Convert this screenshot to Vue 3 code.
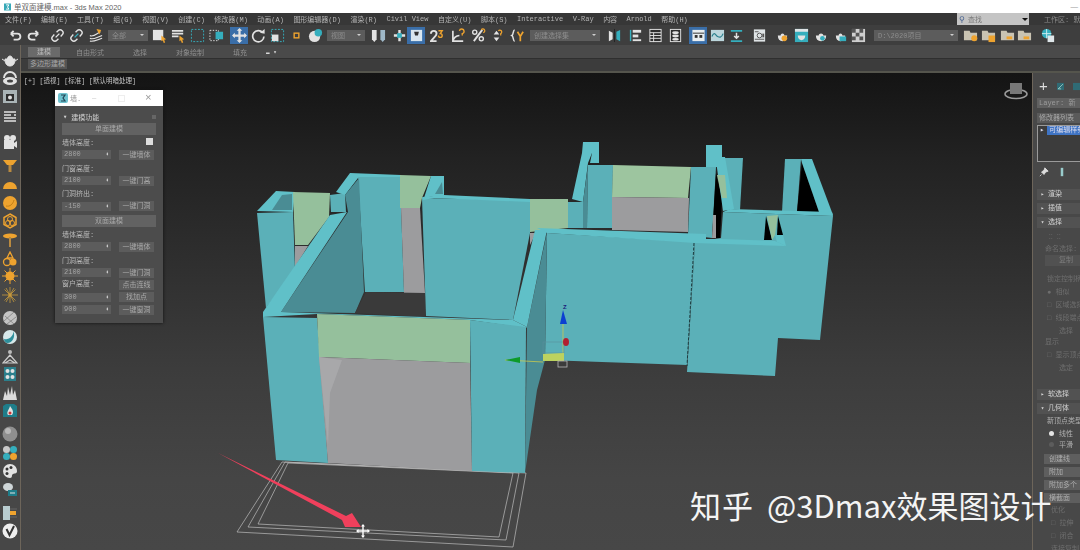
<script setup>
const W = '#e2e2e2'
const O = '#eea32f'
const T = '#35aebd'

// toolbar and rail glyphs, all on a 16x16 box
const glyphs = {
  undo: `<path d="M3 6h7a3.2 3.2 0 0 1 0 6.4H6M3 6l3-3M3 6l3 3" fill="none" stroke="${W}" stroke-width="2"/>`,
  redo: `<path d="M13 6H6a3.2 3.2 0 0 0 0 6.4h4M13 6l-3-3M13 6l-3 3" fill="none" stroke="${W}" stroke-width="2"/>`,
  link: `<path d="M6 10l4-4M7 4.5l1.6-1.6a3 3 0 0 1 4.4 4.4L11.4 9M9 11.5l-1.6 1.6a3 3 0 0 1-4.4-4.4L4.6 7" fill="none" stroke="${W}" stroke-width="1.5"/>`,
  unlink: `<path d="M7 4.5l1.6-1.6a3 3 0 0 1 4.4 4.4L11.4 9M9 11.5l-1.6 1.6a3 3 0 0 1-4.4-4.4L4.6 7" fill="none" stroke="${W}" stroke-width="1.5"/><path d="M6 10l4-4" stroke="${T}" stroke-width="1.5"/>`,
  bind: `<path d="M1 8c3 2 6-1 11-4M1 11c3 2 7-1 13-3M1 14c3 1 7-1 13-3" fill="none" stroke="${W}" stroke-width="1.2"/><path d="M8 1l5 1-2 5z" fill="${O}"/>`,
  sel: `<rect x="1" y="2" width="11" height="11" fill="${W}"/><path d="M10 8l5 4-2 .5 1 3-1.5.5-1-3-1.5 1z" fill="${O}"/>`,
  selname: `<path d="M1 3h12M1 6h12M1 9h7" stroke="${W}" stroke-width="1.8"/><path d="M9 8l5 4-2 .5 1 3-1.5.5-1-3-1.5 1z" fill="${O}"/>`,
  rect: `<rect x="1.5" y="1.5" width="13" height="13" fill="none" stroke="${T}" stroke-dasharray="2 1.5"/>`,
  win: `<rect x="1" y="2.5" width="9" height="11" fill="none" stroke="${W}" stroke-dasharray="1.5 1.5"/><rect x="7" y="4" width="8" height="8" fill="${T}"/>`,
  move: `<path d="M8 1.5v13M1.5 8h13" stroke="${W}" stroke-width="2.4"/><path d="M8 0l3 3H5zM8 16l3-3H5zM0 8l3-3v6zM16 8l-3-3v6z" fill="${W}"/>`,
  rotate: `<path d="M12.5 5a6 6 0 1 0 1.3 4" fill="none" stroke="${W}" stroke-width="1.8"/><path d="M9.5 5l5 1V1z" fill="${W}"/>`,
  scale: `<rect x="1.5" y="1.5" width="13" height="13" fill="none" stroke="${T}" stroke-dasharray="2 1.5"/><rect x="2" y="7" width="7" height="7" fill="${W}"/>`,
  pivot: `<rect x="5.5" y="5.5" width="5" height="5" fill="none" stroke="${O}" stroke-width="1.5"/>`,
  ball: `<circle cx="7" cy="9" r="6" fill="${W}"/><circle cx="11" cy="5" r="4" fill="${T}"/>`,
  mirror: `<path d="M1 2h5v10l-2.5 3L1 12z" fill="${W}"/><path d="M10 2h5v10l-2.5 3L10 12z" fill="#9fb8c8"/>`,
  cross: `<path d="M8 2v12M2 8h12" stroke="${W}" stroke-width="2.6"/><rect x="5.5" y="5.5" width="5" height="5" fill="${T}"/>`,
  frame: `<rect x="2" y="2" width="12" height="12" fill="#d9e6ef"/><path d="M5.5 4h5l-1 4h-3z" fill="#333"/>`,
  snap: `<path d="M1 6a3 3 0 0 1 6 0c0 2-3 4-6 8h6" fill="none" stroke="${W}" stroke-width="2"/><path d="M9 3h4l-2 3a2 2 0 1 1-2 2" fill="none" stroke="${O}" stroke-width="1.5"/>`,
  angle: `<path d="M2 3v11h11M2 14a8 8 0 0 1 7-6" fill="none" stroke="${W}" stroke-width="1.8"/><path d="M9 3a2.5 2.5 0 1 1 3 3v2" fill="none" stroke="${O}" stroke-width="1.5"/>`,
  percent: `<path d="M3 14L12 2" stroke="${W}" stroke-width="2"/><circle cx="4" cy="4.5" r="2.2" fill="none" stroke="${W}" stroke-width="1.5"/><circle cx="11" cy="11.5" r="2.2" fill="none" stroke="${W}" stroke-width="1.5"/><path d="M11 2a2 2 0 1 1 2 3" fill="none" stroke="${O}" stroke-width="1.3"/>`,
  spin: `<path d="M5 7l3-4 3 4zM5 10l3 4 3-4z" fill="${W}"/><path d="M10 3a2 2 0 1 1 2.5 3v2" fill="none" stroke="${O}" stroke-width="1.3"/>`,
  brace: `<path d="M5 2C3 2 4 7 2 8c2 1 1 6 3 6" fill="none" stroke="${W}" stroke-width="1.6"/><path d="M8 4l3 5 3-5M11 9v5" fill="none" stroke="${O}" stroke-width="1.8"/>`,
  mirror2: `<path d="M2 3l4 2v7l-4 2z" fill="${W}"/><path d="M8 1v14" stroke="#222"/><path d="M14 2l-4 2v8l4 2z" fill="${T}"/>`,
  align: `<rect x="2" y="2" width="1.5" height="12" fill="${T}"/><rect x="5" y="2" width="9" height="3" fill="${W}"/><rect x="5" y="7" width="6" height="3" fill="${W}"/><rect x="5" y="12" width="9" height="2" fill="${W}"/>`,
  table: `<rect x="2" y="1.5" width="12" height="13" fill="#2c2c2c" stroke="${W}"/><path d="M2 5h12M2 8h12M2 11h12M6 5v10" stroke="${W}"/>`,
  layers: `<rect x="2.5" y="1.5" width="11" height="13" fill="#2c2c2c" stroke="${W}"/><ellipse cx="8" cy="5" rx="3.5" ry="1.5" fill="${W}"/><ellipse cx="8" cy="8.5" rx="3.5" ry="1.5" fill="${W}"/><ellipse cx="8" cy="12" rx="3.5" ry="1.3" fill="${W}"/>`,
  scene: `<rect x="1.5" y="2" width="13" height="12" fill="#e8edf0"/><path d="M2 5.5h12" stroke="#2c2c2c"/><rect x="4" y="7.5" width="3" height="3" fill="#333"/><rect x="9" y="7.5" width="3" height="3" fill="#333"/>`,
  curve: `<rect x="1" y="2" width="14" height="12" fill="#bcd6dc"/><path d="M2 9c3-6 4-1 6 0s4 2 6-3" fill="none" stroke="#2a7f8c" stroke-width="1.3"/>`,
  schematic: `<path d="M2 3h12M2 14h12" stroke="${T}" stroke-width="2"/><path d="M8 5v6M5.5 8.5L8 11l2.5-2.5" fill="none" stroke="${W}" stroke-width="1.6"/>`,
  panel: `<rect x="2" y="1.5" width="12" height="13" fill="#dfe4e6"/><path d="M3 4h4M3 12h10" stroke="#555"/><circle cx="8" cy="8" r="2.5" fill="none" stroke="#555"/><rect x="11" y="6" width="2" height="4" fill="#555"/>`,
  potA: `<path d="M3 8h10c0 4-2 6-5 6S3 12 3 8zM6 8c0-3 4-3 4 0" fill="${W}"/><circle cx="10" cy="11" r="3" fill="${O}"/>`,
  potB: `<rect x="1" y="1" width="14" height="14" fill="${T}"/><rect x="1" y="1" width="14" height="3" fill="#dfe4e6"/><path d="M4 8h8c0 3-2 5-4 5S4 11 4 8z" fill="${W}"/>`,
  potC: `<path d="M2 8h11c0 4-2 6-5.5 6S2 12 2 8zM5 8c0-3 5-3 5 0" fill="${W}"/><circle cx="9" cy="11" r="2.5" fill="${T}"/>`,
  potD: `<path d="M3 8h10c0 4-2 6-5 6S3 12 3 8zM6 8c0-3 4-3 4 0" fill="${W}"/><rect x="7" y="9" width="7" height="5" fill="${T}"/>`,
  checker: `<rect x="1" y="1" width="14" height="14" fill="#cfcfcf"/><path d="M1 1h4v4H1zM9 1h4v4H9zM5 5h4v4H5zM1 9h4v4H1zM9 9h4v4H9z" fill="#555"/>`,
  fldA: `<path d="M1 3h6l1 2h7v8H1z" fill="#c9c3b2"/><circle cx="12" cy="11" r="3.2" fill="${O}"/>`,
  fldB: `<path d="M1 3h6l1 2h7v8H1z" fill="#c9c3b2"/><rect x="8" y="8" width="7" height="7" fill="${O}"/>`,
  fldC: `<path d="M1 3h6l1 2h7v8H1z" fill="#c9c3b2"/><path d="M7 9h6v3H7z" fill="${O}"/>`,
  globe: `<circle cx="6" cy="6" r="5" fill="${T}"/><path d="M1 6h10M6 1v10" stroke="#cfeef2"/><rect x="7" y="8" width="7" height="7" fill="#dfe7ea"/>`,
  // rail
  teapot: `<path d="M3 7h10c0 5-2 7-5 7S3 12 3 7zM5.5 7c0-4 5-4 5 0M3 9L0 7M13 9l3-2" fill="${W}" stroke="${W}"/>`,
  dome: `<ellipse cx="8" cy="11" rx="7" ry="4" fill="${W}"/><path d="M2 8a6 6 0 0 1 12 0" fill="none" stroke="${W}" stroke-width="2"/><ellipse cx="8" cy="11" rx="3" ry="1.5" fill="#444"/>`,
  photo: `<rect x="1" y="1" width="14" height="13" fill="#aab4b6"/><rect x="4" y="5" width="8" height="7" fill="#2d2d2d"/><circle cx="8" cy="8.5" r="2" fill="${W}"/>`,
  lines: `<path d="M2 3h12M2 6h12M2 9h12M2 12h12" stroke="${W}" stroke-width="1.3"/><rect x="9" y="5" width="3" height="2" fill="#444"/>`,
  movie: `<circle cx="5" cy="4" r="3" fill="${W}"/><circle cx="11" cy="4" r="3" fill="${W}"/><rect x="2" y="6" width="10" height="9" fill="${W}"/><path d="M12 9l3-2v7l-3-2z" fill="${W}"/>`,
  lamp: `<path d="M1 3h14l-4 5H5z" fill="${O}"/><rect x="6.5" y="8" width="3" height="7" fill="#b98a40"/>`,
  half: `<path d="M1 13a7 7 0 0 1 14 0z" fill="${O}"/>`,
  round: `<circle cx="8" cy="8" r="7" fill="${O}"/><path d="M4 11c4 1 7-2 8-6" fill="none" stroke="#c47f14"/>`,
  hex: `<path d="M8 1l6 3.5v7L8 15l-6-3.5v-7z" fill="none" stroke="${O}" stroke-width="1.5"/><circle cx="8" cy="6" r="2.5" fill="none" stroke="${O}"/><circle cx="6" cy="10" r="2.5" fill="none" stroke="${O}"/><circle cx="10" cy="10" r="2.5" fill="none" stroke="${O}"/>`,
  spot: `<ellipse cx="8" cy="4" rx="7" ry="2.5" fill="${O}"/><rect x="7" y="5" width="2" height="10" fill="#b98a40"/>`,
  tri: `<path d="M8 1l3 6H5z" fill="none" stroke="${O}" stroke-width="1.3"/><circle cx="5" cy="11" r="3.5" fill="none" stroke="${O}" stroke-width="1.3"/><circle cx="11" cy="11" r="3.5" fill="${O}"/>`,
  sun: `<circle cx="8" cy="8" r="4.5" fill="${O}"/><path d="M8 0v16M0 8h16M2.5 2.5l11 11M13.5 2.5l-11 11" stroke="${O}"/>`,
  burst: `<circle cx="8" cy="8" r="2" fill="#a07a3a"/><path d="M8 0v16M0 8h16M2.5 2.5l11 11M13.5 2.5l-11 11M4 1l8 14M12 1L4 15" stroke="#c79a3e" stroke-width=".8"/>`,
  sphereG: `<circle cx="8" cy="8" r="7" fill="#c4c4c4"/><path d="M2 11L12 2M5 14l9-7M3 6l9 8" stroke="#777" stroke-width=".7"/>`,
  sphereT: `<circle cx="8" cy="8" r="7" fill="#d6e8ea"/><path d="M1.5 10a8 8 0 0 0 10-8c2 6-1 12-6 12-2 0-3-2-4-4z" fill="#2d8f9c"/>`,
  person: `<circle cx="8" cy="3" r="2" fill="#bbb"/><path d="M1 14L8 6l7 8zM3 14l5-3 5 3" fill="none" stroke="#ccc" stroke-width="1.2"/>`,
  grid: `<rect x="2" y="1" width="12" height="14" fill="#2b7f8c"/><circle cx="5.5" cy="5" r="2" fill="${W}"/><circle cx="10.5" cy="5" r="2" fill="${W}"/><circle cx="5.5" cy="11" r="2" fill="${W}"/><circle cx="10.5" cy="11" r="2" fill="${W}"/>`,
  spiky: `<path d="M1 15L3 6l2 5 1-9 2 8 2-9 1 9 2-5 2 10z" fill="#dcdcdc"/>`,
  flame: `<path d="M1 3l3-2h8l3 2v11H1z" fill="#1f7d8a"/><path d="M8 3c3 4 4 6 2 9H6C4 9 7 7 8 3z" fill="${W}"/><circle cx="8" cy="10" r="1.5" fill="#c33"/>`,
  grey: `<circle cx="8" cy="8" r="7.5" fill="#8f8f8f"/><circle cx="6" cy="5" r="3" fill="#b8b8b8"/>`,
  dots: `<circle cx="4.5" cy="4.5" r="3.5" fill="#c9c9c9"/><circle cx="11.5" cy="4.5" r="3.5" fill="${T}"/><circle cx="4.5" cy="11.5" r="3.5" fill="${T}"/><circle cx="11.5" cy="11.5" r="3.5" fill="${O}"/>`,
  palette: `<path d="M8 1a7 7 0 1 0 0 14c3 0 1-3 3-4s4 0 4-3c0-4-3-7-7-7z" fill="${W}"/><circle cx="5" cy="6" r="1.5" fill="#333"/><circle cx="9" cy="4.5" r="1.5" fill="#333"/><circle cx="5" cy="10.5" r="1.5" fill="#333"/>`,
  chip: `<ellipse cx="6" cy="5" rx="5" ry="4" fill="#cfd6d8"/><rect x="6" y="8" width="9" height="6" fill="#1f7d8a"/><path d="M8 11h5" stroke="${W}"/>`,
  combo: `<rect x="1" y="1" width="7" height="14" fill="#b8ccd0"/><path d="M8 4h7M8 12h7" stroke="#666"/><rect x="8" y="6" width="6" height="4" fill="${O}"/>`,
  vray: `<circle cx="8" cy="8" r="7.5" fill="#eee"/><path d="M4.5 6l3 6 4.5-9" fill="none" stroke="#333" stroke-width="2"/>`
}

const place = (list, key) => {
  // turn centre positions from the data into flow margins
  let end = 0
  return list.map((it) => {
    const size = it.s || 16
    const gap = it[key] - size / 2 - end
    end = it[key] + size / 2
    return { ...it, size, gap }
  })
}

const toolItems = place([
  { x: 15, g: 'undo' }, { x: 33, g: 'redo' }, { x: 57, g: 'link' }, { x: 76, g: 'unlink' }, { x: 96, g: 'bind' },
  { x: 128, s: 40, text: '全部' },
  { x: 159, g: 'sel' }, { x: 178, g: 'selname' }, { x: 197, g: 'rect' }, { x: 216, g: 'win' },
  { x: 239, s: 18, g: 'move', on: true }, { x: 258, g: 'rotate' }, { x: 277, g: 'scale' }, { x: 296, g: 'pivot' }, { x: 315, g: 'ball' },
  { x: 346, s: 38, text: '视图' },
  { x: 378, g: 'mirror' }, { x: 399, g: 'cross' }, { x: 416, s: 18, g: 'frame', on: true },
  { x: 437, g: 'snap' }, { x: 458, g: 'angle' }, { x: 478, g: 'percent' }, { x: 496, g: 'spin' }, { x: 517, g: 'brace' },
  { x: 565, s: 70, text: '创建选择集' },
  { x: 614, g: 'mirror2' }, { x: 635, g: 'align' }, { x: 655, g: 'table' }, { x: 675, g: 'layers' },
  { x: 698, s: 18, g: 'scene', on: true }, { x: 717, g: 'curve' }, { x: 736, g: 'schematic' }, { x: 759, g: 'panel' },
  { x: 782, g: 'potA' }, { x: 801, g: 'potB' }, { x: 821, g: 'potC' }, { x: 840, g: 'potD' }, { x: 858, g: 'checker' },
  { x: 916, s: 84, text: 'D:\\2020项目' },
  { x: 970, g: 'fldA' }, { x: 988, g: 'fldB' }, { x: 1007, g: 'fldC' }, { x: 1024, g: 'fldC' }, { x: 1048, g: 'globe' }
], 'x')

const railItems = place([
  { y: 15, g: 'teapot' }, { y: 33, g: 'dome' }, { y: 52, g: 'photo' }, { y: 72, g: 'lines' }, { y: 97, g: 'movie' },
  { y: 120, g: 'lamp' }, { y: 139, g: 'half' }, { y: 158, g: 'round' }, { y: 176, g: 'hex' }, { y: 195, g: 'spot' },
  { y: 214, g: 'tri' }, { y: 231, g: 'sun' }, { y: 250, g: 'burst' }, { y: 273, g: 'sphereG' }, { y: 292, g: 'sphereT' },
  { y: 312, g: 'person' }, { y: 329, g: 'grid' }, { y: 348, g: 'spiky' }, { y: 366, g: 'flame' }, { y: 389, g: 'grey' },
  { y: 408, g: 'dots' }, { y: 426, g: 'palette' }, { y: 445, g: 'chip' }, { y: 468, g: 'combo' }, { y: 486, g: 'vray' }
], 'y')

const menus = [
  '文件(F)', '编辑(E)', '工具(T)', '组(G)', '视图(V)', '创建(C)', '修改器(M)', '动画(A)', '图形编辑器(D)', '渲染(R)',
  'Civil View', '自定义(U)', '脚本(S)', 'Interactive', 'V-Ray', '内容', 'Arnold', '帮助(H)'
]

const tabs = ['建模', '自由形式', '选择', '对象绘制', '填充']

const dialogRows = [
  { label: '墙体高度:', check: true, value: '2800', btn: '一键墙体' },
  { label: '门窗高度:', value: '2100', btn: '一键门高' },
  { label: '门洞挤出:', value: '-150', btn: '一键门洞' }
]
const dialogRows2 = [
  { label: '墙体高度:', value: '2800', btn: '一键墙体' },
  { label: '门洞高度:', value: '2100', btn: '一键门洞' }
]

// scene faces, back to front, in page coordinates
const TEAL = '#5bb0b8'
const LIGHT = '#60c0c8'
const DARK = '#4a8c94'
const GREEN = '#95c09c'
const GREY = '#9c9c9e'
const faces = [
  ['257,213 293,212 295,270 266,308', TEAL],
  ['257,211 276,191 295,192 293,212', LIGHT],
  ['272,210 282,195 292,194 292,210', DARK],
  ['293,192 330,193 329,217 308,245 295,245', GREEN],
  ['295,246 308,246 295,267', GREY],
  ['330,195 345,193 346,212 331,212', TEAL],
  ['336,192 350,173 401,175 401,177 358,178 345,195', LIGHT],
  ['358,177 400,177 404,292 365,292', TEAL],
  ['345,195 359,178 364,292 355,313 281,312 348,212', DARK],
  ['400,175 431,176 422,198 420,208 400,208', GREEN],
  ['401,208 420,208 425,293 404,293', GREY],
  ['366,292 425,293 425,317 355,313', '#3a3a3a'],
  ['431,176 444,176 444,196 434,196 424,198', LIGHT],
  ['435,194 442,182 443,194', DARK],
  ['583,142 599,142 599,163 590,163 592,153 582,153', LIGHT],
  ['530,199 568,199 568,228 530,232', GREEN],
  ['530,233 536,233 530,245', GREY],
  ['422,198 530,200 530,233 513,320 426,316', TEAL],
  ['422,197 444,195 530,199 530,202 434,198 423,200', LIGHT],
  ['568,202 583,202 583,228 568,228', TEAL],
  ['572,199 582,153 592,153 588,163 583,202', LIGHT],
  ['583,202 588,165 587,228 583,228', DARK],
  ['588,165 613,165 612,228 587,228', TEAL],
  ['613,165 691,167 688,198 612,197', '#9dc59f'],
  ['612,197 689,198 688,232 612,230', GREY],
  ['691,167 716,167 712,238 688,235', TEAL],
  ['706,145 722,145 722,157 717,167 706,167', LIGHT],
  ['716,173 722,200 720,238 712,238', '#000'],
  ['713,215 716,215 716,238 712,238', GREY],
  ['724,158 743,158 740,210 733,209', TEAL],
  ['727,177 731,198 726,198', '#000'],
  ['715,157 725,157 734,209 723,211 717,168', LIGHT],
  ['717,175 725,175 727,198 722,198', GREEN],
  ['785,159 801,159 797,212 782,212', TEAL],
  ['802,163 819,212 797,212', '#000'],
  ['801,159 812,159 833,215 819,212 802,163', LIGHT],
  ['723,212 833,216 820,340 778,338 775,376 687,372 695,242 721,238', TEAL],
  ['730,209 832,212 833,216 723,212', LIGHT],
  ['766,216 772,240 764,240', '#000'],
  ['767,216 778,215 775,235 772,240', GREEN],
  ['778,216 783,235 777,235', '#000'],
  ['775,235 783,235 786,246 777,242', LIGHT],
  ['547,233 695,242 687,365 545,360', TEAL],
  ['537,228 706,234 706,239 720,239 775,241 786,246 695,243 547,233', LIGHT],
  ['547,232 545,360 537,390 525,473 527,327', DARK],
  ['535,230 547,230 527,327 513,320', LIGHT],
  ['263,312 281,312 513,320 527,327 526,328 470,320 317,314 263,317', LIGHT],
  ['330,215 347,212 281,312 263,312', LIGHT],
  ['263,317 317,318 328,463 276,460', TEAL],
  ['317,314 470,320 470,363 319,357', GREEN],
  ['319,357 470,363 472,471 328,463', GREY],
  ['319,357 342,360 330,393 328,445', '#a8a8aa'],
  ['470,320 526,327 525,473 472,471', TEAL]
]
const frames = [
  '282,462 237,532 513,547 526,473',
  '285,462 248,527 506,540 519,473',
  '288,463 258,524 499,537 513,473'
]
</script>

<template>
  <div class="app">
    <div class="titlebar">
      <svg class="title-logo" viewBox="0 0 10 10"><rect width="10" height="10" fill="#38a9b8" /><path d="M3 2h4L5 5l2 3H3" fill="none" stroke="#fff" stroke-width="1.4" /></svg>
      <span>单双面建模.max - 3ds Max 2020</span>
      <span class="title-min">—</span>
    </div>

    <div class="menubar">
      <span v-for="m in menus" :key="m" class="menu">{{ m }}</span>
      <div class="searchbox"><span class="lens">⚲</span><span>查找</span><i class="caret-black"></i></div>
      <span class="workspace">工作区: 默</span>
    </div>

    <div class="toolbar">
      <template v-for="(it, i) in toolItems" :key="i">
        <div v-if="it.text" class="drop" :style="{ marginLeft: it.gap + 'px', width: it.size + 'px' }">
          <span>{{ it.text }}</span><i class="caret"></i>
        </div>
        <div v-else class="tool" :class="{ on: it.on }" :style="{ marginLeft: it.gap + 'px', width: it.size + 'px' }">
          <svg viewBox="0 0 16 16" width="15" height="15" v-html="glyphs[it.g]"></svg>
        </div>
      </template>
    </div>

    <div class="body">
      <div class="rail">
        <svg v-for="(it, i) in railItems" :key="i" class="rail-icon" viewBox="0 0 16 16" :style="{ marginTop: it.gap + 'px' }" v-html="glyphs[it.g]"></svg>
      </div>

      <div class="work">
        <div class="ribbon">
          <span v-for="(t, i) in tabs" :key="t" class="tab" :class="{ active: i === 0 }">{{ t }}</span>
          <span class="tab-eye">▬ ▾</span>
        </div>
        <div class="subribbon"><span class="subtab">多边形建模</span></div>
        <div class="strip"></div>

        <div class="split">
          <div class="viewport">
            <svg class="scene" viewBox="21 73 1011 477">
              <polyline v-for="(f, i) in frames" :key="i" :points="f + ' ' + f.split(' ')[0]" fill="none" stroke="#bdbdbd" stroke-width="0.7" />
              <polygon v-for="(f, i) in faces" :key="i" :points="f[0]" :fill="f[1]" />
              <path d="M694 243 687 366" stroke="#1d3c40" stroke-width="1" stroke-dasharray="3 1.5" />
              <path d="M505 360 543 362M563 320V353" stroke="#c9c94e" stroke-width="0.8" fill="none" />
              <rect x="543" y="342" width="21" height="11" fill="none" stroke="#5b8f9c" stroke-width="0.6" />
              <polygon points="543,354 564,353 564,361 543,361" fill="#bcd25f" />
              <rect x="558" y="361" width="9" height="6" fill="none" stroke="#b6b6b6" stroke-width="0.8" />
              <polygon points="563,310 560,324 567,324" fill="#0c3fd1" />
              <polygon points="505,360 520,357 520,363" fill="#0e9a2a" />
              <ellipse cx="566" cy="342" rx="3" ry="4" fill="#b21f2f" />
              <text x="563" y="309" class="axis">Z</text>
              <polygon points="218,453 346,516 352,513 361,527 345,527 342,520" fill="#f0405c" />
              <g stroke="#fff" stroke-width="1.4" fill="#fff">
                <path d="M363 525v12M357 531h12" />
                <path d="M363 524l2 2.5h-4zM363 538l2-2.5h-4zM356 531l2.5-2v4zM370 531l-2.5-2v4z" stroke="none" />
              </g>
              <g>
                <ellipse cx="1016" cy="94" rx="11" ry="4.5" fill="none" stroke="#9b9b9b" stroke-width="1.5" />
                <rect x="1010" y="83" width="12" height="11" fill="#787878" />
              </g>
            </svg>
            <div class="view-label">[+] [透视] [标准] [默认明暗处理]</div>

            <div class="dialog">
              <div class="dialog-title">
                <svg viewBox="0 0 10 10" width="10" height="10"><rect width="10" height="10" rx="2" fill="#6fc2cf" /><path d="M3 2h4L5 5l2 3H3" fill="none" stroke="#245" stroke-width="1.2" /></svg>
                <span class="dialog-name">墙.</span>
                <span class="dialog-min">—</span>
                <span class="dialog-max"></span>
                <span class="dialog-close">×</span>
              </div>
              <div class="dialog-body">
                <div class="rollout-head"><span>▾</span><b>建模功能</b><i></i></div>
                <div class="wide-btn">单面建模</div>
                <div v-for="r in dialogRows" :key="r.btn" class="group">
                  <div class="field-label">{{ r.label }}<i v-if="r.check" class="check"></i></div>
                  <div class="field">
                    <span class="spinner">{{ r.value }}<em>⬍</em></span>
                    <span class="small-btn">{{ r.btn }}</span>
                  </div>
                </div>
                <div class="wide-btn second">双面建模</div>
                <div v-for="r in dialogRows2" :key="r.btn" class="group">
                  <div class="field-label">{{ r.label }}</div>
                  <div class="field">
                    <span class="spinner">{{ r.value }}<em>⬍</em></span>
                    <span class="small-btn">{{ r.btn }}</span>
                  </div>
                </div>
                <div class="field tall">
                  <div class="field-label bare">窗户高度:</div>
                  <span class="small-btn">点击连线</span>
                </div>
                <div class="field tall">
                  <span class="spinner">300<em>⬍</em></span>
                  <span class="small-btn">找加点</span>
                </div>
                <div class="field tall">
                  <span class="spinner">900<em>⬍</em></span>
                  <span class="small-btn">一键窗洞</span>
                </div>
              </div>
            </div>
          </div>

          <div class="panel">
            <div class="panel-tabs">
              <span class="plus">+</span>
              <svg viewBox="0 0 12 12" width="11" height="11"><rect width="12" height="12" fill="#2f6b75" /><path d="M2 10L10 2M2 10h5" stroke="#cfe" fill="none" /></svg>
              <svg viewBox="0 0 12 12" width="11" height="11"><rect width="12" height="12" fill="#2f6b75" /></svg>
            </div>
            <div class="layer">Layer: 新</div>
            <div class="modlist-label">修改器列表</div>
            <div class="modlist"><div class="mod-row"><span>▸</span><b>可编辑样条线</b></div></div>
            <div class="pins">
              <svg viewBox="0 0 12 12" width="10" height="10"><path d="M7 1l4 4-3 1-2 3-3-3 3-2zM3 9l-2 2" fill="#ddd" stroke="#ddd" /></svg>
              <svg viewBox="0 0 12 12" width="10" height="10"><path d="M6 1v10" stroke="#9cc" stroke-width="3" /></svg>
            </div>

            <div class="roll first"><span>▸</span>渲染</div>
            <div class="roll"><span>▸</span>插值</div>
            <div class="roll"><span>▾</span>选择</div>

            <div class="dim-block">
              <div class="dim-icons">⁚⁚ ⁚⁚</div>
              <div class="dim-text">命名选择:</div>
              <div class="dim-btn">复制</div>
              <div class="dim-text ind">锁定控制柄</div>
              <div class="dim-text ind">● 相似</div>
              <div class="dim-text ind">□ 区域选择</div>
              <div class="dim-text ind">□ 线段端点</div>
              <div class="dim-text ind2">选择</div>
              <div class="dim-text">显示</div>
              <div class="dim-text ind">□ 显示顶点</div>
              <div class="dim-text ind2">选定</div>
            </div>

            <div class="roll lower"><span>▸</span>软选择</div>
            <div class="roll"><span>▾</span>几何体</div>
            <div class="plain">新顶点类型</div>
            <div class="radio"><i class="dot on"></i>线性</div>
            <div class="radio"><i class="dot"></i>平滑</div>
            <div class="geo-btn first-geo">创建线</div>
            <div class="geo-btn">附加</div>
            <div class="geo-btn">附加多个</div>
            <div class="geo-btn">横截面</div>
            <div class="dim-text far">优化</div>
            <div class="dim-text far">□ 拉伸</div>
            <div class="dim-text far">□ 闭合</div>
            <div class="dim-text far">连接复制</div>
          </div>
        </div>
      </div>
    </div>

    <div class="watermark"><span class="zhihu">知乎</span><span>@3Dmax效果图设计</span></div>
  </div>
</template>

<style>
html, body {
  margin: 0;
  background: #333;
}
</style>

<style scoped>
.app {
  width: 1080px;
  height: 550px;
  position: relative;
  overflow: hidden;
  display: flex;
  flex-direction: column;
  font-family: "Liberation Mono", "Noto Sans CJK SC", monospace;
  font-size: 7px;
  color: #b4b4b4;
  background: #3c3c3c;
}

.titlebar {
  height: 13px;
  flex: none;
  display: flex;
  align-items: center;
  gap: 3px;
  padding-left: 4px;
  background: #fff;
  color: #666;
  font-family: "Liberation Sans", "Noto Sans CJK SC", sans-serif;
  font-size: 7.5px;
}
.title-logo { width: 7px; height: 8px; }
.title-min { margin-left: auto; margin-right: 2px; color: #999; }

.menubar {
  height: 12px;
  flex: none;
  display: flex;
  align-items: center;
  gap: 9.45px;
  padding-left: 5px;
  background: #373737;
  overflow: hidden;
  filter: blur(.35px);
}
.menu { white-space: nowrap; }
.searchbox {
  width: 72px;
  height: 12px;
  flex: none;
  margin-left: auto;
  margin-right: 5.5px;
  display: flex;
  align-items: center;
  gap: 3px;
  padding-left: 2px;
  box-sizing: border-box;
  background: #c4c4c4;
  color: #777;
}
.lens { color: #44608f; font-size: 8px; }
.caret-black {
  margin-left: auto;
  margin-right: 1px;
  border: 3px solid transparent;
  border-top-color: #111;
  border-bottom: 0;
}
.workspace { flex: none; width: 36px; color: #8a8a8a; white-space: nowrap; }

.toolbar {
  height: 20px;
  flex: none;
  display: flex;
  align-items: center;
  background: #3e3e3e;
  filter: blur(.35px);
}
.tool {
  height: 17px;
  flex: none;
  display: flex;
  align-items: center;
  justify-content: center;
}
.tool.on { background: #3a6ea8; }
.drop {
  height: 11px;
  flex: none;
  box-sizing: border-box;
  display: flex;
  align-items: center;
  justify-content: space-between;
  padding: 0 4px;
  background: #5c5c5c;
  color: #8d8d8d;
}
.caret {
  border: 2.5px solid transparent;
  border-top-color: #cfcfcf;
  border-bottom: 0;
}

.body {
  flex: 1;
  min-height: 0;
  display: flex;
}
.rail {
  width: 20px;
  flex: none;
  display: flex;
  flex-direction: column;
  align-items: center;
  background: #474747;
  border-right: 1px solid #6d655a;
}
.rail-icon { width: 16px; height: 16px; flex: none; filter: blur(.3px); }

.work {
  flex: 1;
  min-width: 0;
  display: flex;
  flex-direction: column;
}
.ribbon {
  height: 13px;
  flex: none;
  display: flex;
  align-items: center;
  padding-left: 7px;
  background: #4a4a4a;
  color: #8f8f8f;
  filter: blur(.35px);
}
.tab { width: 28px; text-align: center; margin-right: 29px; white-space: nowrap; }
.tab:nth-child(1) { width: 32px; margin-right: 16px; }
.tab:nth-child(3), .tab:nth-child(5) { width: 14px; }
.tab:nth-child(5) { margin-right: 19px; }
.tab.active { background: #6a6a6a; height: 10px; line-height: 10px; color: #b8b8b8; }
.tab-eye { color: #ddd; font-size: 6px; }
.subribbon {
  height: 11px;
  flex: none;
  display: flex;
  align-items: center;
  padding-left: 7px;
  background: #3c3c3c;
  border-top: 1px solid #2f2f2f;
  box-sizing: border-box;
}
.subtab { background: #545454; height: 10px; line-height: 10px; padding: 0 2px; color: #a8a8a8; }
.strip { height: 4px; flex: none; background: linear-gradient(#3c3c3c 50%, #55554d 50%); }

.split {
  flex: 1;
  min-height: 0;
  display: flex;
}
.viewport {
  flex: 1;
  min-width: 0;
  position: relative;
  overflow: hidden;
  background: linear-gradient(#141414 0%, #222 18%, #2f2f2f 40%, #3c3c3c 62%, #454545 85%, #474747 100%);
}
.scene { position: absolute; left: 0; top: 0; width: 1011px; height: 477px; }
.axis { font-family: "Liberation Sans", sans-serif; font-size: 6px; font-weight: bold; fill: #1a1a7a; }
.view-label {
  position: absolute;
  left: 3px;
  top: 2px;
  font-size: 6.5px;
  color: #c4c4c4;
  white-space: nowrap;
  filter: blur(.3px);
}

.dialog {
  position: absolute;
  left: 34px;
  top: 17px;
  width: 108px;
  height: 233px;
  background: #4c4c4c;
  display: flex;
  flex-direction: column;
  box-shadow: 0 0 3px #111;
  filter: blur(.35px);
}
.dialog-title {
  height: 16px;
  flex: none;
  display: flex;
  align-items: center;
  padding-left: 3px;
  background: #fff;
  color: #999;
  position: relative;
}
.dialog-name { margin-left: 2px; }
.dialog-min { position: absolute; left: 37px; color: #ccc; }
.dialog-max { position: absolute; left: 63px; width: 5px; height: 5px; border: 1px solid #eee; }
.dialog-close { position: absolute; left: 90px; font-size: 11px; color: #999; }
.dialog-body {
  flex: 1;
  padding: 5px 7px 0 7px;
  display: flex;
  flex-direction: column;
}
.rollout-head {
  display: flex;
  align-items: center;
  gap: 4px;
  height: 11px;
  padding-left: 1px;
  color: #d0d0d0;
}
.rollout-head b { font-weight: normal; }
.rollout-head i { margin-left: auto; width: 4px; height: 4px; background: #666; }
.wide-btn {
  height: 12px;
  margin-top: 1px;
  line-height: 12px;
  text-align: center;
  background: #626262;
  color: #a8a8a8;
}
.wide-btn.second { margin-top: 2.6px; }
.group { margin-top: 2.8px; }
.field-label {
  height: 11px;
  line-height: 11px;
  color: #b8b8b8;
  position: relative;
}
.field-label.bare { width: 50px; }
.check {
  position: absolute;
  right: 3px;
  top: 0;
  width: 7px;
  height: 7px;
  background: #ddd;
}
.field {
  height: 12px;
  display: flex;
  align-items: center;
  justify-content: space-between;
  padding-right: 2px;
}
.field.tall { height: 12.5px; }
.spinner {
  width: 49px;
  height: 9px;
  line-height: 9px;
  box-sizing: border-box;
  padding: 0 2px;
  display: flex;
  justify-content: space-between;
  background: #5c5c5c;
  color: #a4a4a4;
}
.spinner em { font-style: normal; color: #ddd; font-size: 6px; }
.small-btn {
  width: 35px;
  height: 10px;
  line-height: 10px;
  text-align: center;
  background: #5c5c5c;
  color: #a8a8a8;
}

.watermark {
  position: absolute;
  left: 690px;
  top: 485px;
  display: flex;
  gap: 13px;
  font-family: "Noto Sans CJK SC", sans-serif;
  font-size: 31px;
  line-height: 40px;
  color: #f4f4f4;
  white-space: nowrap;
}
.zhihu { letter-spacing: 1px; }

.panel {
  width: 48px;
  flex: none;
  box-sizing: border-box;
  padding-left: 4px;
  overflow: hidden;
  background: #484848;
  border-left: 1px solid #6d655a;
  color: #b4b4b4;
  white-space: nowrap;
  filter: blur(.35px);
}
.panel-tabs {
  height: 16px;
  margin-top: 5px;
  display: flex;
  align-items: center;
  gap: 9px;
  padding-left: 2px;
}
.plus { font-size: 15px; line-height: 16px; color: #ddd; font-family: "Liberation Sans", sans-serif; }
.layer {
  height: 10px;
  line-height: 10px;
  margin-top: 4px;
  width: 60px;
  padding-left: 2px;
  background: #606060;
  color: #9c9c9c;
}
.modlist-label {
  height: 10px;
  line-height: 10px;
  margin-top: 5px;
  width: 60px;
  padding-left: 2px;
  background: #5a5a5a;
  color: #a8a8a8;
}
.modlist {
  height: 37px;
  width: 60px;
  margin-top: 2px;
  box-sizing: border-box;
  border: 1px solid #9a9a9a;
  background: #3c3c3c;
}
.mod-row {
  height: 9px;
  line-height: 9px;
  display: flex;
  gap: 3px;
  padding-left: 2px;
  color: #dde;
}
.mod-row b { font-weight: normal; background: #3f74c4; padding: 0 2px; flex: 1; }
.pins {
  height: 12px;
  margin-top: 4px;
  display: flex;
  align-items: center;
  gap: 8px;
  padding-left: 2px;
}
.roll {
  height: 11px;
  line-height: 11px;
  margin-top: 3px;
  width: 60px;
  background: #525252;
  color: #d4d4d4;
}
.roll.first { margin-top: 11px; }
.roll.lower { margin-top: 0; }
.roll span { display: inline-block; width: 11px; text-align: center; font-size: 6px; }
.dim-block { height: 161px; padding-top: 4px; box-sizing: border-box; }
.dim-icons { color: #707070; height: 12px; padding-left: 12px; }
.dim-text { color: #6e6e6e; height: 11px; line-height: 11px; padding-left: 8px; }
.dim-text.ind { padding-left: 10px; margin-top: 2px; }
.dim-text.ind2 { padding-left: 22px; margin-top: 2px; }
.dim-text.far { padding-left: 14px; margin-top: 2px; }
.dim-btn {
  width: 50px;
  height: 11px;
  line-height: 11px;
  margin: 0 0 8px 8px;
  padding-left: 14px;
  box-sizing: border-box;
  background: #515151;
  color: #7c7c7c;
}
.plain { height: 11px; line-height: 11px; margin-top: 2px; padding-left: 10px; color: #b0b0b0; }
.radio { height: 10px; display: flex; align-items: center; gap: 5px; padding-left: 12px; margin-top: 1px; color: #b0b0b0; }
.dot { width: 5px; height: 5px; border-radius: 50%; background: #5c5c5c; flex: none; }
.dot.on { background: #e4e4e4; }
.geo-btn {
  width: 50px;
  height: 10px;
  line-height: 10px;
  margin: 3px 0 0 7px;
  padding-left: 5px;
  box-sizing: border-box;
  background: #5e5e5e;
  color: #aeaeae;
}
.geo-btn.first-geo { margin-top: 5px; }
</style>
